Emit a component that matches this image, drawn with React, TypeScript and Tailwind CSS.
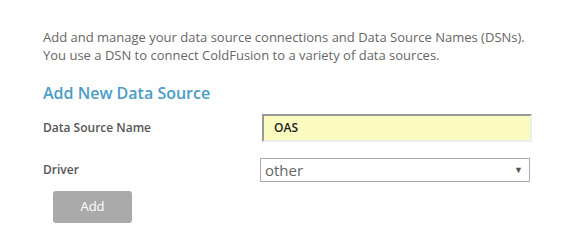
import React from 'react';

const App: React.FC = () => {
  return (
    <div className="w-[586px] h-[236px] bg-white overflow-hidden font-['Open_Sans',sans-serif]">
      <div className="pl-[43px] pt-[28px]">
        <p className="text-[13px] leading-[18px] text-[#666]">
          Add and manage your data source connections and Data Source Names (DSNs).
          <br />
          You use a DSN to connect ColdFusion to a variety of data sources.
        </p>
        <h2 className="mt-[18px] text-[16px] leading-[22px] font-semibold text-[#4a9cc6]">
          Add New Data Source
        </h2>

        {/* Form */}
        <div className="mt-[10px] flex flex-col">
          <div className="flex items-center h-[28px]">
            <label className="w-[219px] text-[12px] font-semibold text-[#555]">Data Source Name</label>
            <div className="w-[270px] h-[28px] bg-[#fbfbc0] border-2 border-t-[#999] border-l-[#999] border-b-[#eee] border-r-[#eee] flex items-center pl-[10px]">
              <span className="text-[12px] font-semibold text-[#222]">OAS</span>
            </div>
          </div>

          <div className="flex items-center h-[24px] mt-[16px]">
            <label className="w-[217px] text-[12px] font-semibold text-[#555]">Driver</label>
            <div className="relative w-[270px] h-[24px] border border-[#aaa] bg-white flex items-center pl-[4px]">
              <span className="text-[15px] text-[#666]">other</span>
              <span className="absolute right-[6px] top-[4px] text-[9px] text-[#555]">▼</span>
            </div>
          </div>

          <div className="mt-[9px] pl-[10px]">
            <button className="w-[79px] h-[32px] rounded-[3px] bg-[#aaa] text-white text-[13px]">Add</button>
          </div>
        </div>
      </div>
    </div>
  );
};

export default App;
